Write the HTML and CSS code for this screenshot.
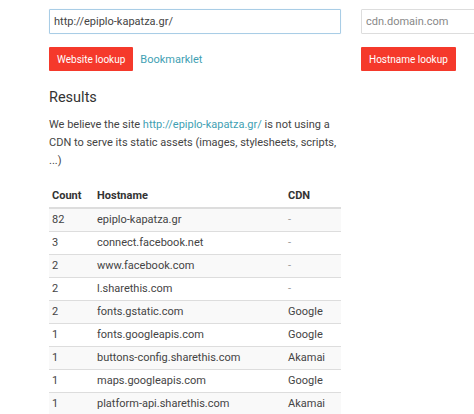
FILE: index.html
```html
<!DOCTYPE html>
<html>
<head>
<meta charset="utf-8">
<link rel="stylesheet" href="styles.css">
</head>
<body>
<div class="page">
  <div class="col main">
    <input class="field focused" type="text" value="http://epiplo-kapatza.gr/">
    <div class="actions">
      <button class="btn">Website lookup</button>
      <a class="link" href="#">Bookmarklet</a>
    </div>
    <h2 class="title">Results</h2>
    <p class="text">We believe the site <a class="link" href="#">http://epiplo-kapatza.gr/</a> is not using a CDN to serve its static assets (images, stylesheets, scripts, ...)</p>
    <table class="results">
      <thead>
        <tr><th class="c-count">Count</th><th>Hostname</th><th class="c-cdn">CDN</th></tr>
      </thead>
      <tbody>
        <tr><td>82</td><td>epiplo-kapatza.gr</td><td class="dash">-</td></tr>
        <tr><td>3</td><td>connect.facebook.net</td><td class="dash">-</td></tr>
        <tr><td>2</td><td>www.facebook.com</td><td class="dash">-</td></tr>
        <tr><td>2</td><td>l.sharethis.com</td><td class="dash">-</td></tr>
        <tr><td>2</td><td>fonts.gstatic.com</td><td>Google</td></tr>
        <tr><td>1</td><td>fonts.googleapis.com</td><td>Google</td></tr>
        <tr><td>1</td><td>buttons-config.sharethis.com</td><td>Akamai</td></tr>
        <tr><td>1</td><td>maps.googleapis.com</td><td>Google</td></tr>
        <tr><td>1</td><td>platform-api.sharethis.com</td><td>Akamai</td></tr>
      </tbody>
    </table>
  </div>
  <div class="col side">
    <input class="field" type="text" placeholder="cdn.domain.com">
    <div class="actions">
      <button class="btn">Hostname lookup</button>
    </div>
  </div>
</div>
</body>
</html>
```

FILE: styles.css
```css
html, body {
  margin: 0;
  padding: 0;
  overflow: hidden;
  background: #fff;
}
body {
  font-family: Roboto, "Liberation Sans", sans-serif;
  font-size: 11px;
  color: #444;
}
.page {
  display: flex;
  gap: 20px;
  padding: 9px 0 0 49px;
  width: 600px;
}
.col.main {
  width: 292px;
  flex: none;
}
.col.side {
  width: 150px;
  flex: none;
}
.field {
  display: block;
  box-sizing: border-box;
  width: 100%;
  height: 25px;
  margin: 0;
  padding: 0 4px;
  border: 1px solid #ddd;
  border-radius: 1px;
  font-family: inherit;
  font-size: 11px;
  color: #444;
  outline: none;
  background: #fff;
}
.field::placeholder {
  color: #888;
}
.field.focused {
  border-color: #a9cde6;
  box-shadow: 0 0 1px #cfe3f1;
}
.actions {
  display: flex;
  align-items: center;
  gap: 7px;
  margin-top: 13px;
}
.btn {
  height: 24px;
  padding: 0 8px;
  border: none;
  border-radius: 1px;
  background: #f5392b;
  color: #fff;
  font-family: inherit;
  font-size: 10px;
  cursor: pointer;
}
.link {
  color: #3f9fb3;
  text-decoration: none;
}
.title {
  margin: 18px 0 0;
  font-size: 14.5px;
  font-weight: normal;
  color: #333;
  line-height: 18px;
}
.text {
  margin: 9px 0 0;
  line-height: 18px;
}
.results {
  margin-top: 15px;
  width: 100%;
  border-collapse: collapse;
}
.results th, .results td {
  text-align: left;
  padding: 0 3px;
  height: 22px;
  line-height: 14px;
}
.results th {
  font-weight: bold;
  color: #333;
  border-bottom: 2px solid #ddd;
}
.results td {
  border-top: 1px solid #ddd;
}
.results tbody tr:first-child td {
  border-top: none;
}
.results tbody tr:nth-child(odd) td {
  background: #f9f9f9;
}
.c-count { width: 39px; }
.c-cdn { width: 50px; }
.dash { color: #999; }
```
